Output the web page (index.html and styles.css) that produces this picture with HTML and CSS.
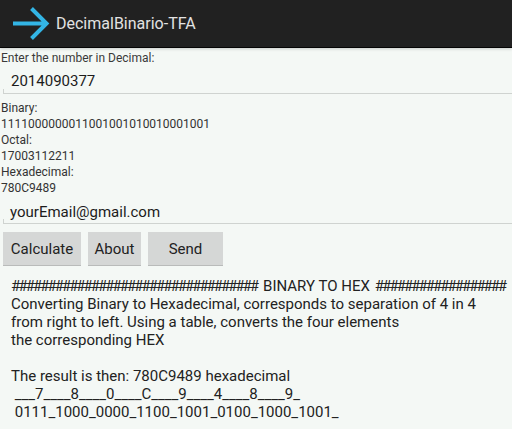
FILE: index.html
```html
<!DOCTYPE html>
<html>
<head>
<meta charset="utf-8">
<link rel="stylesheet" href="styles.css">
</head>
<body>
<header class="actionbar">
  <svg class="logo" width="50" height="47" viewBox="0 0 50 47">
    <path d="M13 23.5 H46 M31.5 8.5 L46.5 23.5 L31.5 38.5" fill="none" stroke="#33b5e5" stroke-width="4" stroke-linecap="butt" stroke-linejoin="miter"/>
  </svg>
  <span class="title">DecimalBinario-TFA</span>
</header>
<main class="content">
  <div class="label">Enter the number in Decimal:</div>
  <div class="edit edit-number">2014090377</div>
  <div class="results">
    <div class="small">Binary:</div>
    <div class="small">1111000000011001001010010001001</div>
    <div class="small">Octal:</div>
    <div class="small">17003112211</div>
    <div class="small">Hexadecimal:</div>
    <div class="small">780C9489</div>
  </div>
  <div class="edit edit-email">yourEmail@gmail.com</div>
  <div class="buttons">
    <div class="btn btn-calc">Calculate</div>
    <div class="btn btn-about">About</div>
    <div class="btn btn-send">Send</div>
  </div>
  <div class="explain">
    <div class="line"><span class="hash">##################################</span><span class="mid">BINARY TO HEX</span><span class="hash">##################</span></div>
    <div class="line">Converting Binary to Hexadecimal, corresponds to separation of 4 in 4</div>
    <div class="line">from right to left. Using a table, converts the four elements</div>
    <div class="line">the corresponding HEX</div>
    <div class="line">&nbsp;</div>
    <div class="line">The result is then: 780C9489 hexadecimal</div>
    <div class="line">&nbsp;___7____8____0____C____9____4____8____9_</div>
    <div class="line">&nbsp;0111_1000_0000_1100_1001_0100_1000_1001_</div>
  </div>
</main>
</body>
</html>
```
FILE: styles.css
```css
html, body {
  margin: 0;
  padding: 0;
}
body {
  width: 512px;
  height: 429px;
  overflow: hidden;
  background: #f4f8f5;
  font-family: Roboto, "Noto Sans", sans-serif;
  color: #222;
}
.actionbar {
  height: 47px;
  background: #212121;
  border-bottom: 1px solid #050505;
  display: flex;
  align-items: center;
  box-shadow: 0 1px 3px rgba(0,0,0,0.18);
}
.logo {
  display: block;
  flex: none;
}
.title {
  margin-left: 6px;
  color: #e2e2e2;
  font-size: 16px;
  margin-top: -1px;
}
.label {
  font-size: 12px;
  line-height: 14px;
  color: #3a3a3a;
  padding: 3px 0 0 1px;
}
.edit {
  margin-left: 3px;
  border-bottom: 1.5px solid #cfd3d0;
  font-size: 15px;
  color: #1c1c1c;
  position: relative;
}
.edit::before {
  content: "";
  position: absolute;
  left: 0;
  bottom: 0;
  width: 1px;
  height: 4px;
  background: #cfd3d0;
}
.edit-number {
  height: 20px;
  padding: 8px 0 0 8px;
  line-height: 17px;
}
.edit-email {
  height: 19px;
  padding: 3px 0 0 7px;
  line-height: 17px;
}
.results {
  padding: 6px 0 5px 1px;
}
.small {
  font-size: 12px;
  line-height: 16px;
  color: #333;
}
.buttons {
  display: flex;
  gap: 7px;
  padding: 8px 0 0 3px;
}
.btn {
  height: 34px;
  background: #d5d7d6;
  border-bottom: 1px solid #b9bbba;
  box-sizing: border-box;
  font-size: 15px;
  line-height: 34px;
  text-align: center;
  color: #222;
}
.btn-calc { width: 78px; }
.btn-about { width: 53px; }
.btn-send { width: 75px; }
.explain {
  padding: 11px 0 0 11px;
  font-size: 15px;
  line-height: 18px;
  color: #222;
  white-space: nowrap;
}
.hash {
  letter-spacing: -2px;
}
.mid {
  margin: 0 5px 0 6px;
}
```
